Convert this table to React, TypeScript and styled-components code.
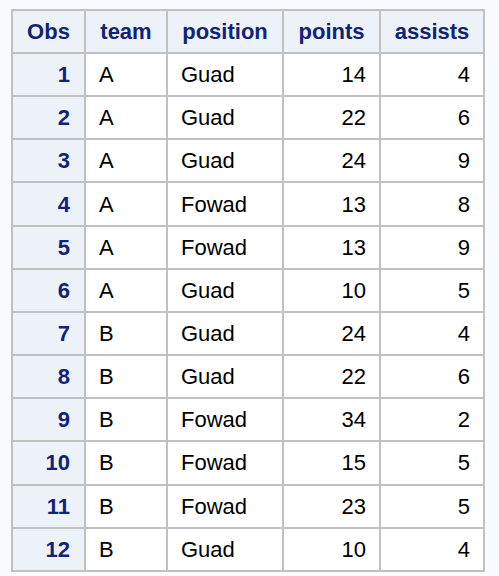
import React from "react";
import styled, { createGlobalStyle } from "styled-components";

const GlobalStyle = createGlobalStyle`
  html, body {
    margin: 0;
    padding: 0;
    background: #fafbfe;
  }
  body {
    font-family: "Liberation Sans", Arial, sans-serif;
  }
`;

const Page = styled.div`
  padding: 9px 0 0 11px;
`;

const Table = styled.table`
  border-collapse: separate;
  border-spacing: 0;
  border: 1px solid #c1c1c1;
  font-family: "Liberation Sans", Arial, sans-serif;
  font-size: 22px;
  line-height: 25px;
`;

const HeadCell = styled.th<{ $w: number }>`
  box-sizing: border-box;
  width: ${(p) => p.$w}px;
  height: 43px;
  padding: 0 12px;
  border: 1px solid #c1c1c1;
  background: #edf2f9;
  color: #112277;
  font-weight: bold;
  text-align: center;
  vertical-align: middle;
`;

const ObsCell = styled.th`
  box-sizing: border-box;
  height: 43.17px;
  padding: 0 14px 0 12px;
  border: 1px solid #c1c1c1;
  background: #edf2f9;
  color: #112277;
  font-weight: bold;
  text-align: right;
  vertical-align: middle;
`;

const DataCell = styled.td<{ $num?: boolean }>`
  box-sizing: border-box;
  height: 43.17px;
  padding: ${(p) => (p.$num ? "0 13px 0 12px" : "0 12px 0 13px")};
  border: 1px solid #c1c1c1;
  background: #ffffff;
  color: #000000;
  font-weight: normal;
  text-align: ${(p) => (p.$num ? "right" : "left")};
  vertical-align: middle;
`;

const columns = [
  { label: "Obs", w: 73 },
  { label: "team", w: 82 },
  { label: "position", w: 116 },
  { label: "points", w: 97 },
  { label: "assists", w: 104 },
];

const rows: [string, string, number, number][] = [
  ["A", "Guad", 14, 4],
  ["A", "Guad", 22, 6],
  ["A", "Guad", 24, 9],
  ["A", "Fowad", 13, 8],
  ["A", "Fowad", 13, 9],
  ["A", "Guad", 10, 5],
  ["B", "Guad", 24, 4],
  ["B", "Guad", 22, 6],
  ["B", "Fowad", 34, 2],
  ["B", "Fowad", 15, 5],
  ["B", "Fowad", 23, 5],
  ["B", "Guad", 10, 4],
];

export default function App() {
  return (
    <>
      <GlobalStyle />
      <Page>
        <Table>
          <thead>
            <tr>
              {columns.map((c) => (
                <HeadCell key={c.label} $w={c.w} scope="col">
                  {c.label}
                </HeadCell>
              ))}
            </tr>
          </thead>
          <tbody>
            {rows.map((r, i) => (
              <tr key={i}>
                <ObsCell scope="row">{i + 1}</ObsCell>
                <DataCell>{r[0]}</DataCell>
                <DataCell>{r[1]}</DataCell>
                <DataCell $num>{r[2]}</DataCell>
                <DataCell $num>{r[3]}</DataCell>
              </tr>
            ))}
          </tbody>
        </Table>
      </Page>
    </>
  );
}
